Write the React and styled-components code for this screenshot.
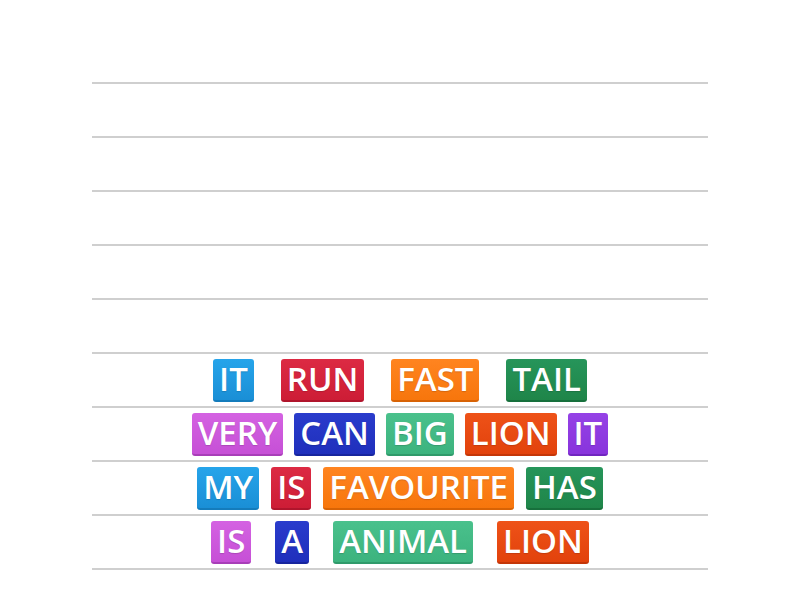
import React from "react";
import styled, { createGlobalStyle } from "styled-components";

const GlobalStyle = createGlobalStyle`
    body{
        margin: 0;
        background: #ffffff;
        font-family: "Open Sans", "Liberation Sans", sans-serif;
    }
`;

const colors = {
    blue: ["#26a4ea", "#1a8fd6", "#147cbc"],
    red: ["#dc2a43", "#cd1d36", "#b0152c"],
    orange: ["#ff8420", "#f7760c", "#d86305"],
    green: ["#26955a", "#1f8549", "#17703c"],
    magenta: ["#d462e2", "#c650d6", "#a83eb8"],
    navy: ["#2a3ccc", "#1f2fbc", "#17259e"],
    teal: ["#4ac18c", "#3cb37e", "#2f9a6a"],
    flame: ["#ee5218", "#e2420c", "#c43608"],
    purple: ["#9542e6", "#8834dc", "#7026bf"],
};

const rows = [
    { gap: 27, words: [["IT", "blue"], ["RUN", "red"], ["FAST", "orange"], ["TAIL", "green"]] },
    { gap: 11, words: [["VERY", "magenta"], ["CAN", "navy"], ["BIG", "teal"], ["LION", "flame"], ["IT", "purple"]] },
    { gap: 12, words: [["MY", "blue"], ["IS", "red"], ["FAVOURITE", "orange"], ["HAS", "green"]] },
    { gap: 24, words: [["IS", "magenta"], ["A", "navy"], ["ANIMAL", "teal"], ["LION", "flame"]] },
];

const Game = () => {
    return(
        <Board>
            <GlobalStyle />
            {[0, 1, 2, 3, 4].map((i) => (
                <Row key={"empty" + i} />
            ))}
            {rows.map((row, i) => (
                <Row key={i} $gap={row.gap}>
                    {row.words.map(([word, color], j) => (
                        <Tile key={j} $shade={colors[color]}>{word}</Tile>
                    ))}
                </Row>
            ))}
        </Board>
    );
};

const Board = styled.div`
    width: 616px;
    margin: 82px 0 0 92px;
    border-top: 2px solid #cfcfcf;
`;

const Row = styled.div`
    box-sizing: border-box;
    height: 54px;
    border-bottom: 2px solid #cfcfcf;
    display: flex;
    justify-content: center;
    align-items: flex-start;
    gap: ${(p) => p.$gap || 0}px;
    padding-top: 5px;
`;

const Tile = styled.div`
    box-sizing: border-box;
    height: 43px;
    padding: 0 6px 3px;
    display: flex;
    align-items: center;
    color: #ffffff;
    font-size: 33px;
    font-weight: 600;
    line-height: 1;
    border-radius: 3px;
    background: linear-gradient(to bottom, ${(p) => p.$shade[0]}, ${(p) => p.$shade[1]});
    border-bottom: 2px solid ${(p) => p.$shade[2]};
    text-shadow: 0 1px 1px rgba(0, 0, 0, 0.15);
`;

export default Game;
